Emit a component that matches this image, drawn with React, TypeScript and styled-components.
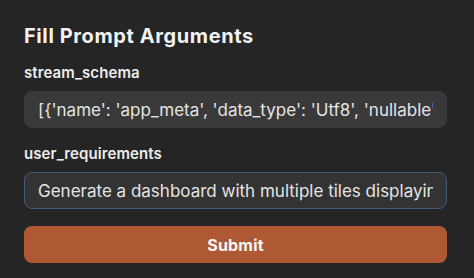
import styled, { createGlobalStyle } from "styled-components"

const Global = createGlobalStyle`
  html, body {
    margin: 0;
    padding: 0;
    background: #252525;
  }
  body {
    font-family: Inter, "Noto Sans", sans-serif;
  }
`

const Dialog = styled.form`
  width: 474px;
  height: 278px;
  box-sizing: border-box;
  padding: 24px 27px 0 24px;
  background: #252525;
  display: flex;
  flex-direction: column;
`

const Title = styled.h2`
  margin: 0 0 16px;
  color: #f2f2f2;
  font-size: 20px;
  font-weight: 700;
  line-height: 24px;
  letter-spacing: 0.6px;
`

const Field = styled.div`
  display: flex;
  flex-direction: column;
  gap: 9px;
  margin-bottom: 17px;
`

const Label = styled.label`
  color: #ececec;
  font-size: 15px;
  font-weight: 600;
  line-height: 18px;
  letter-spacing: 0.1px;
`

const Input = styled.input<{ $focused?: boolean }>`
  height: 37px;
  box-sizing: border-box;
  padding: 0 13px;
  border-radius: 8px;
  border: 1px solid ${p => (p.$focused ? "#415a7e" : "#393939")};
  background: ${p => (p.$focused ? "#333333" : "#393939")};
  color: #e4e4e4;
  font-family: inherit;
  font-size: 17px;
  outline: none;
  caret-color: #e4e4e4;
`

const Submit = styled.button`
  height: 37px;
  border: none;
  border-radius: 8px;
  background: #ae5934;
  color: #f6f6f6;
  font-family: inherit;
  font-size: 16px;
  font-weight: 700;
  letter-spacing: 0.2px;
  cursor: pointer;
`

export default function App() {
  return (
    <>
      <Global />
      <Dialog onSubmit={e => e.preventDefault()}>
        <Title>Fill Prompt Arguments</Title>
        <Field>
          <Label>stream_schema</Label>
          <Input
            readOnly
            value="[{'name': 'app_meta', 'data_type': 'Utf8', 'nullable': True}]"
          />
        </Field>
        <Field>
          <Label>user_requirements</Label>
          <Input
            $focused
            readOnly
            value="Generate a dashboard with multiple tiles displaying key metrics"
          />
        </Field>
        <Submit type="submit">Submit</Submit>
      </Dialog>
    </>
  )
}
